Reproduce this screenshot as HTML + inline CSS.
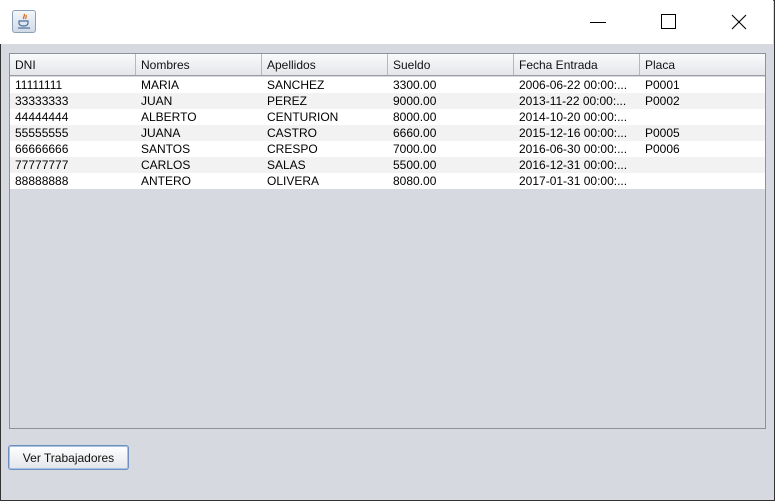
<!DOCTYPE html><html><head><style>
*{margin:0;padding:0;box-sizing:border-box}
body{width:775px;height:501px;background:#d6d9df;position:relative;font-family:"Liberation Sans",sans-serif;font-size:12px;overflow:hidden}
.win{position:absolute;left:0;top:0;width:775px;height:501px;border:1px solid #333;border-top-color:#555}
.title{position:absolute;left:0;top:0;width:773px;height:44px;background:#fff}
.icon{position:absolute;left:12px;top:10px;width:24px;height:23px;border:1px solid #8aa0b8;border-radius:3px;background:linear-gradient(#f4f7fb,#d0dae6)}
.tbl{position:absolute;left:9px;top:53px;width:757px;height:376px;border:1px solid #8e9199;background:#d6d9df}
.hdr{position:absolute;left:0;top:0;width:755px;height:22px;background:linear-gradient(#fafbfc,#e4e6ea);border-bottom:1px solid #9a9ca2}
.hc{position:absolute;top:0;height:21px;line-height:23px;padding-left:5px;border-right:1px solid #b4b7bd;color:#111}
.row{position:absolute;left:0;width:755px;height:16px;line-height:16px}
.row span{position:absolute;top:0;padding-left:5px;white-space:nowrap}
.btn{position:absolute;left:8px;top:445px;width:121px;height:25px;border:1px solid #6d8fc0;border-radius:3px;background:linear-gradient(#fff,#e2e5ea);box-shadow:inset 0 0 0 1px #a9c2e4;text-align:center;line-height:25px;color:#111}
</style></head><body>
<div class="win"></div>
<div class="title">
<div class="icon"><svg width="22" height="21" viewBox="0 0 22 21"><path d="M11 3c2 2-2 3 0 5M13 4c1 2-1 3 0 4" stroke="#e07020" fill="none" stroke-width="1.3"/><path d="M6 10h9v2c0 2-2 3-4.5 3S6 14 6 12z" fill="none" stroke="#4a6fa0" stroke-width="1.2"/><path d="M5 17h12" stroke="#4a6fa0" stroke-width="1.2"/></svg></div>
<svg style="position:absolute;left:590px;top:14px" width="160" height="18"><path d="M0 8.5h16" stroke="#000"/><path d="M71.5 0.5h14v14h-14z" fill="none" stroke="#000"/><path d="M142 1l14 14M156 1l-14 14" stroke="#000" stroke-width="1.1"/></svg>
</div>
<div class="tbl">
<div class="hdr">
<div class="hc" style="left:0;width:126px">DNI</div><div class="hc" style="left:126px;width:126px">Nombres</div><div class="hc" style="left:252px;width:126px">Apellidos</div><div class="hc" style="left:378px;width:126px">Sueldo</div><div class="hc" style="left:504px;width:126px">Fecha Entrada</div><div class="hc" style="left:630px;width:125px;border-right:none">Placa</div>
</div>
<div class="row" style="top:23px;background:#fff"><span style="left:0">11111111</span><span style="left:126px">MARIA</span><span style="left:252px">SANCHEZ</span><span style="left:378px">3300.00</span><span style="left:504px">2006-06-22 00:00:...</span><span style="left:630px">P0001</span></div>
<div class="row" style="top:39px;background:#f2f2f2"><span style="left:0">33333333</span><span style="left:126px">JUAN</span><span style="left:252px">PEREZ</span><span style="left:378px">9000.00</span><span style="left:504px">2013-11-22 00:00:...</span><span style="left:630px">P0002</span></div>
<div class="row" style="top:55px;background:#fff"><span style="left:0">44444444</span><span style="left:126px">ALBERTO</span><span style="left:252px">CENTURION</span><span style="left:378px">8000.00</span><span style="left:504px">2014-10-20 00:00:...</span></div>
<div class="row" style="top:71px;background:#f2f2f2"><span style="left:0">55555555</span><span style="left:126px">JUANA</span><span style="left:252px">CASTRO</span><span style="left:378px">6660.00</span><span style="left:504px">2015-12-16 00:00:...</span><span style="left:630px">P0005</span></div>
<div class="row" style="top:87px;background:#fff"><span style="left:0">66666666</span><span style="left:126px">SANTOS</span><span style="left:252px">CRESPO</span><span style="left:378px">7000.00</span><span style="left:504px">2016-06-30 00:00:...</span><span style="left:630px">P0006</span></div>
<div class="row" style="top:103px;background:#f2f2f2"><span style="left:0">77777777</span><span style="left:126px">CARLOS</span><span style="left:252px">SALAS</span><span style="left:378px">5500.00</span><span style="left:504px">2016-12-31 00:00:...</span></div>
<div class="row" style="top:119px;background:#fff"><span style="left:0">88888888</span><span style="left:126px">ANTERO</span><span style="left:252px">OLIVERA</span><span style="left:378px">8080.00</span><span style="left:504px">2017-01-31 00:00:...</span></div>
</div>
<div class="btn">Ver Trabajadores</div>
</body></html>
